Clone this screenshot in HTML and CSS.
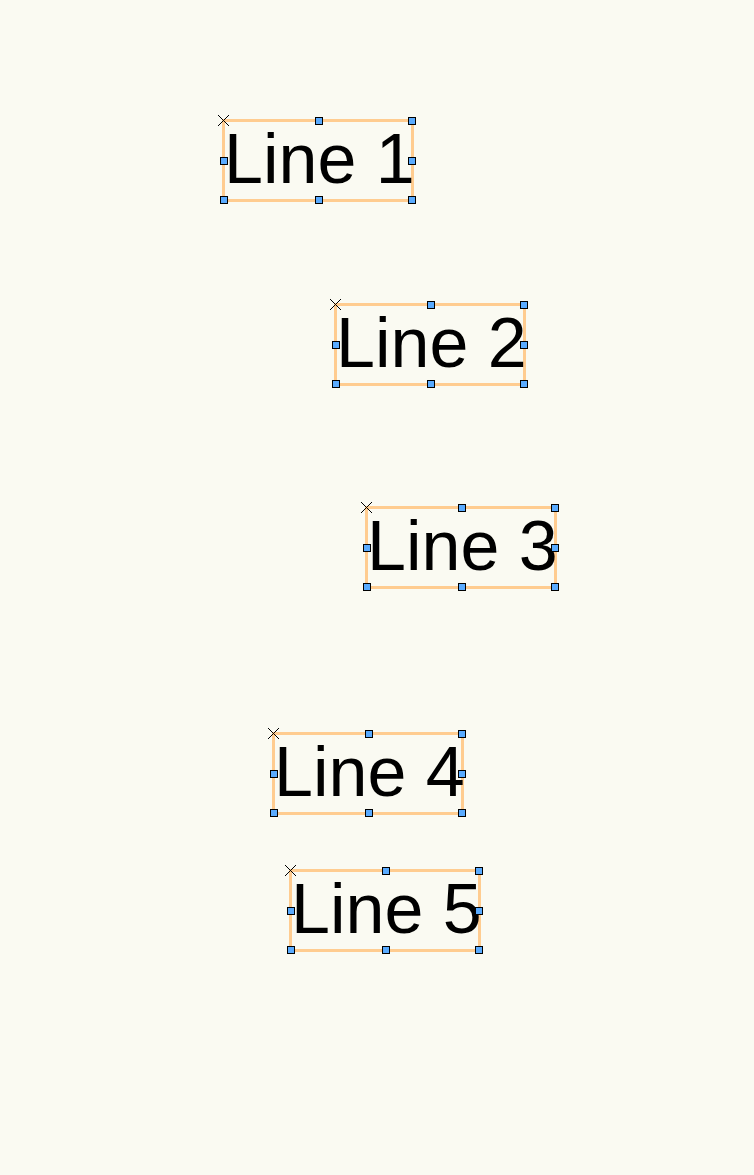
FILE: index.html
```html
<!DOCTYPE html>
<html>
<head>
<meta charset="utf-8">
<link rel="stylesheet" href="styles.css">
</head>
<body>
<div class="canvas">
  <div class="box" style="left:222px;top:119px">
    <span class="label">Line 1</span>
    <svg class="cross" width="11" height="11" viewBox="0 0 11 11"><path d="M0 0L11 11M11 0L0 11"/></svg>
    <i class="h tm"></i><i class="h tr"></i><i class="h ml"></i><i class="h mr"></i><i class="h bl"></i><i class="h bm"></i><i class="h br"></i>
  </div>
  <div class="box" style="left:334px;top:303px">
    <span class="label">Line 2</span>
    <svg class="cross" width="11" height="11" viewBox="0 0 11 11"><path d="M0 0L11 11M11 0L0 11"/></svg>
    <i class="h tm"></i><i class="h tr"></i><i class="h ml"></i><i class="h mr"></i><i class="h bl"></i><i class="h bm"></i><i class="h br"></i>
  </div>
  <div class="box" style="left:365px;top:506px">
    <span class="label">Line 3</span>
    <svg class="cross" width="11" height="11" viewBox="0 0 11 11"><path d="M0 0L11 11M11 0L0 11"/></svg>
    <i class="h tm"></i><i class="h tr"></i><i class="h ml"></i><i class="h mr"></i><i class="h bl"></i><i class="h bm"></i><i class="h br"></i>
  </div>
  <div class="box" style="left:272px;top:732px">
    <span class="label">Line 4</span>
    <svg class="cross" width="11" height="11" viewBox="0 0 11 11"><path d="M0 0L11 11M11 0L0 11"/></svg>
    <i class="h tm"></i><i class="h tr"></i><i class="h ml"></i><i class="h mr"></i><i class="h bl"></i><i class="h bm"></i><i class="h br"></i>
  </div>
  <div class="box" style="left:289px;top:869px">
    <span class="label">Line 5</span>
    <svg class="cross" width="11" height="11" viewBox="0 0 11 11"><path d="M0 0L11 11M11 0L0 11"/></svg>
    <i class="h tm"></i><i class="h tr"></i><i class="h ml"></i><i class="h mr"></i><i class="h bl"></i><i class="h bm"></i><i class="h br"></i>
  </div>
</div>
</body>
</html>
```
FILE: styles.css
```css
html, body {
  margin: 0;
  padding: 0;
  background: #fafaf2;
}
.canvas {
  position: relative;
  width: 754px;
  height: 1175px;
  overflow: hidden;
  background: #fafaf2;
}
.box {
  position: absolute;
  box-sizing: border-box;
  width: 192px;
  height: 83px;
  border: 3px solid #ffcc90;
}
.label {
  display: block;
  margin-left: -1px;
  padding-top: 2px;
  font-family: "Liberation Sans", Arial, sans-serif;
  font-size: 70px;
  line-height: 70px;
  color: #000;
  white-space: nowrap;
}
.cross {
  position: absolute;
  left: -7px;
  top: -7px;
  overflow: visible;
}
.cross path {
  stroke: #000;
  stroke-width: 1;
  fill: none;
}
.h {
  position: absolute;
  box-sizing: border-box;
  width: 8px;
  height: 8px;
  background: #5aabff;
  border: 1px solid #000;
}
.tm { left: calc(50% - 3px); top: -5px; }
.tr { right: -5px; top: -5px; }
.ml { left: -5px; top: 35px; }
.mr { right: -5px; top: 35px; }
.bl { left: -5px; bottom: -5px; }
.bm { left: calc(50% - 3px); bottom: -5px; }
.br { right: -5px; bottom: -5px; }
```
